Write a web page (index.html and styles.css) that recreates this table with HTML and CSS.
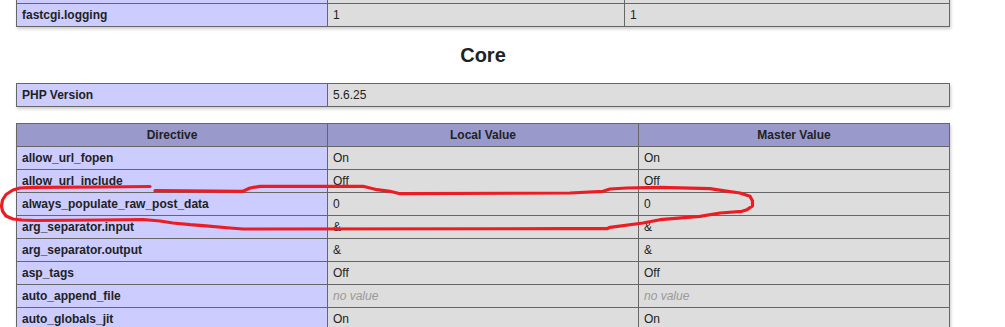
FILE: index.html
```html
<!DOCTYPE html>
<html>
<head>
<meta charset="utf-8">
<link rel="stylesheet" href="styles.css">
</head>
<body>
<div class="page">
  <table class="t-first">
    <tr><td class="e">&nbsp;</td><td class="v v-mid">&nbsp;</td><td class="v">&nbsp;</td></tr>
    <tr><td class="e">fastcgi.logging</td><td class="v v-mid">1</td><td class="v">1</td></tr>
  </table>

  <h2>Core</h2>

  <table class="t-ver">
    <tr><td class="e">PHP Version</td><td class="v">5.6.25</td></tr>
  </table>

  <table class="t-dir">
    <tr class="h"><th>Directive</th><th class="local">Local Value</th><th>Master Value</th></tr>
    <tr><td class="e">allow_url_fopen</td><td class="v">On</td><td class="v">On</td></tr>
    <tr><td class="e">allow_url_include</td><td class="v">Off</td><td class="v">Off</td></tr>
    <tr><td class="e">always_populate_raw_post_data</td><td class="v">0</td><td class="v">0</td></tr>
    <tr><td class="e">arg_separator.input</td><td class="v">&amp;</td><td class="v">&amp;</td></tr>
    <tr><td class="e">arg_separator.output</td><td class="v">&amp;</td><td class="v">&amp;</td></tr>
    <tr><td class="e">asp_tags</td><td class="v">Off</td><td class="v">Off</td></tr>
    <tr><td class="e">auto_append_file</td><td class="v"><i>no value</i></td><td class="v"><i>no value</i></td></tr>
    <tr><td class="e">auto_globals_jit</td><td class="v">On</td><td class="v">On</td></tr>
    <tr><td class="e">&nbsp;</td><td class="v">&nbsp;</td><td class="v">&nbsp;</td></tr>
  </table>

  <svg class="marker" width="1005" height="327" viewBox="0 0 1005 327" xmlns="http://www.w3.org/2000/svg">
    <polyline fill="none" stroke="#ed1c24" stroke-width="3.2" stroke-linejoin="round" stroke-linecap="round"
      points="150,186.5 100,187 33,187.3 20,188 13,190 6,194.5 2.5,200 1.5,206 2.5,211 6,216 13,219 22,220 35,220.5 100,220 143,219.5 160,221 173,223 190,224.7 203,225.7 230,228 243,229 570,228.7 607,228.7 610,227.3 643,223 660,219.7 700,216.3 720,213 742,211.3 747,209.7 752.5,206 752.5,201 750,196.3 740,193 723,190.7 710,188.7 660,187.3 627,188 610,189 603,191.3 570,193 400,193.7 390,191.3 377,189.7 363,186.3 260,186.3 250,188 243,191.3 155,190.7"/>
  </svg>
</div>
</body>
</html>
```

FILE: styles.css
```css
html, body {
  margin: 0;
  padding: 0;
  background: #fff;
}

body {
  color: #222;
  font-family: "Liberation Sans", Arial, sans-serif;
  overflow: hidden;
}

.page {
  position: relative;
  padding-left: 16px;
  width: 989px;
  height: 327px;
  overflow: hidden;
}

table {
  border-collapse: collapse;
  border: 0;
  width: 934px;
  box-shadow: 1px 2px 3px #ccc;
  text-align: left;
}

td, th {
  border: 1px solid #666;
  font-size: 12px;
  vertical-align: baseline;
  padding: 4px 5px;
  line-height: 14px;
}

.t-first {
  margin: -20px 0 0 0;
}

.t-ver {
  margin: 0 0 16px 0;
}

.t-dir {
  margin: 0;
}

h2 {
  font-size: 20px;
  font-weight: bold;
  text-align: center;
  margin: 17px 0 16px 0;
  line-height: 23px;
  width: 934px;
}

.e {
  background-color: #ccf;
  width: 300px;
  font-weight: bold;
}

.v {
  background-color: #ddd;
}

.v-mid {
  width: 286px;
}

.v i {
  color: #999;
}

.h th {
  background-color: #99c;
  font-weight: bold;
  text-align: center;
}

.h th:first-child {
  width: 300px;
}

.h th.local {
  width: 300px;
}

.marker {
  position: absolute;
  top: 0;
  left: 0;
  pointer-events: none;
}
```
